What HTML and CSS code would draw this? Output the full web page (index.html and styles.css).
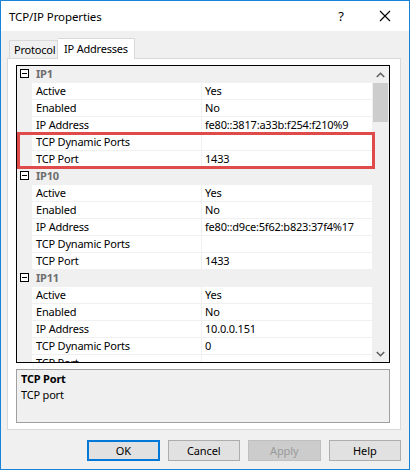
FILE: index.html
```html
<!DOCTYPE html>
<html>
<head>
<meta charset="utf-8">
<link rel="stylesheet" href="styles.css">
</head>
<body>
<div class="window">
  <div class="titlebar">
    <span class="title">TCP/IP Properties</span>
    <span class="help">?</span>
    <span class="close">
      <svg width="12" height="12" viewBox="0 0 12 12"><path d="M1 1L11 11M11 1L1 11" stroke="#000" stroke-width="1.1" fill="none"/></svg>
    </span>
  </div>
  <div class="content">
    <div class="tabs">
      <div class="tab">Protocol</div>
      <div class="tab active">IP Addresses</div>
    </div>
    <div class="panel">
      <div class="grid">
        <div class="rows">
          <div class="row cat"><div class="margin"><span class="minus"></span></div><div class="catname">IP1</div></div>
          <div class="row"><div class="margin"></div><div class="name">Active</div><div class="value">Yes</div></div>
          <div class="row"><div class="margin"></div><div class="name">Enabled</div><div class="value">No</div></div>
          <div class="row"><div class="margin"></div><div class="name">IP Address</div><div class="value">fe80::3817:a33b:f254:f210%9</div></div>
          <div class="row"><div class="margin"></div><div class="name">TCP Dynamic Ports</div><div class="value"></div></div>
          <div class="row"><div class="margin"></div><div class="name">TCP Port</div><div class="value">1433</div></div>
          <div class="row cat"><div class="margin"><span class="minus"></span></div><div class="catname">IP10</div></div>
          <div class="row"><div class="margin"></div><div class="name">Active</div><div class="value">Yes</div></div>
          <div class="row"><div class="margin"></div><div class="name">Enabled</div><div class="value">No</div></div>
          <div class="row"><div class="margin"></div><div class="name">IP Address</div><div class="value">fe80::d9ce:5f62:b823:37f4%17</div></div>
          <div class="row"><div class="margin"></div><div class="name">TCP Dynamic Ports</div><div class="value"></div></div>
          <div class="row"><div class="margin"></div><div class="name">TCP Port</div><div class="value">1433</div></div>
          <div class="row cat"><div class="margin"><span class="minus"></span></div><div class="catname">IP11</div></div>
          <div class="row"><div class="margin"></div><div class="name">Active</div><div class="value">Yes</div></div>
          <div class="row"><div class="margin"></div><div class="name">Enabled</div><div class="value">No</div></div>
          <div class="row"><div class="margin"></div><div class="name">IP Address</div><div class="value">10.0.0.151</div></div>
          <div class="row"><div class="margin"></div><div class="name">TCP Dynamic Ports</div><div class="value">0</div></div>
          <div class="row"><div class="margin"></div><div class="name">TCP Port</div><div class="value"></div></div>
        </div>
        <div class="scrollbar">
          <div class="arrow">
            <svg width="9" height="6" viewBox="0 0 9 6"><path d="M0.8 5L4.5 1.3L8.2 5" stroke="#606060" stroke-width="1.6" fill="none"/></svg>
          </div>
          <div class="track"><div class="thumb"></div></div>
          <div class="arrow">
            <svg width="9" height="6" viewBox="0 0 9 6"><path d="M0.8 1L4.5 4.7L8.2 1" stroke="#606060" stroke-width="1.6" fill="none"/></svg>
          </div>
        </div>
        <div class="highlight"></div>
      </div>
      <div class="desc">
        <div class="desc-title">TCP Port</div>
        <div class="desc-text">TCP port</div>
      </div>
    </div>
    <div class="buttons">
      <button class="btn default">OK</button>
      <button class="btn">Cancel</button>
      <button class="btn disabled">Apply</button>
      <button class="btn">Help</button>
    </div>
  </div>
</div>
</body>
</html>
```
FILE: styles.css
```css
* { box-sizing: border-box; }
html, body { margin: 0; padding: 0; }
body {
  font-family: "Noto Sans", "Open Sans", sans-serif;
  font-size: 11px;
  letter-spacing: -0.2px;
  color: #000;
  background: #fff;
}
.window {
  width: 410px;
  height: 470px;
  border: 1px solid #1883d7;
  display: flex;
  flex-direction: column;
  background: #f0f0f0;
}
.titlebar {
  height: 30px;
  background: #fff;
  display: flex;
  align-items: center;
  padding-left: 8px;
  flex: none;
}
.title { font-size: 11.5px; letter-spacing: -0.1px; flex: 1; }
.help { width: 20px; text-align: center; margin-right: 24px; font-size: 13px; color: #000; }
.close { width: 20px; display: flex; justify-content: center; margin-right: 14px; }
.content {
  flex: 1;
  display: flex;
  flex-direction: column;
  padding: 7px 8px 0 6px;
}
.tabs {
  display: flex;
  align-items: flex-end;
  height: 20px;
  padding-left: 2px;
  position: relative;
  z-index: 1;
}
.tab {
  height: 18px;
  line-height: 17px;
  width: 49px;
  padding-left: 4px;
  white-space: nowrap;
  border: 1px solid #d9d9d9;
  border-bottom: none;
  background: #f0f0f0;
}
.tab.active {
  height: 21px;
  width: 77px;
  margin-bottom: -1px;
  padding-left: 6px;
  background: #fff;
  border-left: none;
  line-height: 19px;
}
.panel {
  height: 372px;
  background: #fff;
  border: 1px solid #d9d9d9;
  padding: 6px 10px 0 8px;
  display: flex;
  flex-direction: column;
}
.grid {
  position: relative;
  height: 298px;
  border: 1px solid #000;
  display: flex;
  overflow: hidden;
}
.rows {
  flex: 1;
  display: flex;
  flex-direction: column;
}
.row {
  display: flex;
  height: 17px;
  flex: none;
}
.margin {
  width: 15px;
  background: #f0f0f0;
  position: relative;
  flex: none;
}
.name, .value {
  height: 17px;
  line-height: 16px;
  border-bottom: 1px solid #f0f0f0;
  white-space: nowrap;
  overflow: hidden;
}
.name {
  width: 170px;
  padding-left: 4px;
  border-right: 1px solid #f0f0f0;
}
.value {
  flex: 1;
  padding-left: 3px;
}
.cat { background: #f0f0f0; }
.catname {
  flex: 1;
  padding-left: 4px;
  line-height: 16px;
  font-weight: bold;
  color: #6d6d6d;
}
.minus {
  position: absolute;
  left: 3px;
  top: 3px;
  width: 9px;
  height: 9px;
  border: 1px solid #000;
  background: #fff;
}
.minus::after {
  content: "";
  position: absolute;
  left: 1px;
  top: 3px;
  width: 5px;
  height: 1px;
  background: #000;
}
.scrollbar {
  width: 17px;
  background: #f0f0f0;
  display: flex;
  flex-direction: column;
  flex: none;
}
.arrow {
  height: 17px;
  display: flex;
  align-items: center;
  justify-content: center;
  flex: none;
}
.track { flex: 1; }
.thumb {
  height: 39px;
  background: #cdcdcd;
  margin: 0 1px;
}
.highlight {
  position: absolute;
  left: 0;
  top: 66px;
  width: 358px;
  height: 37px;
  border: 3px solid #df4b4b;
}
.desc {
  margin-top: 6px;
  height: 54px;
  background: #f0f0f0;
  border: 1px solid #a0a0a0;
  padding: 1px 4px;
  line-height: 16px;
}
.desc-title { font-weight: bold; }
.buttons {
  display: flex;
  gap: 8px;
  padding-left: 80px;
  margin-top: 10px;
}
.btn {
  width: 73px;
  height: 21px;
  font-family: "Noto Sans", "Open Sans", sans-serif;
  font-size: 11px;
  letter-spacing: -0.1px;
  background: #e1e1e1;
  border: 1px solid #adadad;
  padding: 0;
  color: #000;
}
.btn.default { border: 2px solid #0078d7; }
.btn.disabled { background: #cccccc; border-color: #bfbfbf; color: #9a9a9a; }
```
